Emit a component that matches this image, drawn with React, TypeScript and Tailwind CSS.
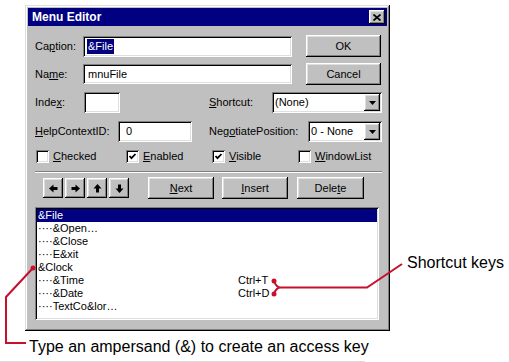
import React from "react";

const raised =
  "bg-[#c0c0c0] shadow-[inset_-1px_-1px_0_#000,inset_1px_1px_0_#fff,inset_-2px_-2px_0_#808080,inset_2px_2px_0_#dfdfdf]";
const sunken =
  "bg-white shadow-[inset_1px_1px_0_#808080,inset_-1px_-1px_0_#fff,inset_2px_2px_0_#000,inset_-2px_-2px_0_#dfdfdf]";

function U({ children }: { children: React.ReactNode }) {
  return <span className="underline underline-offset-[1px]">{children}</span>;
}

function DropBtn() {
  return (
    <div className={`${raised} w-[16px] h-[17px] flex items-center justify-center`}>
      <svg width="7" height="4" viewBox="0 0 7 4">
        <polygon points="0,0 7,0 3.5,4" fill="#000" />
      </svg>
    </div>
  );
}

function Check({ checked, label }: { checked: boolean; label: React.ReactNode }) {
  return (
    <div className="flex items-center gap-[4px]">
      <div className={`${sunken} w-[13px] h-[13px] flex items-center justify-center`}>
        {checked && (
          <svg width="9" height="9" viewBox="0 0 9 9">
            <path d="M1.5 4 L3.5 6.2 L7.5 2" stroke="#000" strokeWidth="1.8" fill="none" />
          </svg>
        )}
      </div>
      <span>{label}</span>
    </div>
  );
}

function Arrow({ rot }: { rot: number }) {
  return (
    <div className={`${raised} w-[20px] h-[20px] flex items-center justify-center`}>
      <svg width="9" height="9" viewBox="0 0 9 9" style={{ transform: `rotate(${rot}deg)` }}>
        <polygon points="0,4.5 4.5,0.5 4.5,3 8.5,3 8.5,6 4.5,6 4.5,8.5" fill="#000" />
      </svg>
    </div>
  );
}

const rows: { t: string; s?: string; sel?: boolean }[] = [
  { t: "&File", sel: true },
  { t: "····&Open…" },
  { t: "····&Close" },
  { t: "····E&xit" },
  { t: "&Clock" },
  { t: "····&Time", s: "Ctrl+T" },
  { t: "····&Date", s: "Ctrl+D" },
  { t: "····TextCo&lor…" },
];

export default function App() {
  return (
    <div className="w-[509px] h-[362px] bg-white relative overflow-hidden font-['Liberation_Sans',Arial,sans-serif] text-[11px] text-black leading-none">
      <div className="ml-[25px] mt-[5px] w-[365px] h-[326px] bg-[#c0c0c0] p-[3px] shadow-[inset_-1px_-1px_0_#000,inset_1px_1px_0_#dfdfdf,inset_-2px_-2px_0_#808080,inset_2px_2px_0_#fff]">
        <div className="h-[18px] bg-[#000080] flex items-center justify-between pl-[4px] pr-[2px]">
          <span className="text-white font-bold text-[12px]">Menu Editor</span>
          <div className={`${raised} w-[16px] h-[14px] flex items-center justify-center`}>
            <svg width="8" height="7" viewBox="0 0 8 7">
              <path d="M0.5 0.5 L7.5 6.5 M7.5 0.5 L0.5 6.5" stroke="#000" strokeWidth="1.7" />
            </svg>
          </div>
        </div>

        <div className="pl-[7px] pr-[5px] flex flex-col">
          {/* Caption */}
          <div className="mt-[9px] h-[22px] flex items-center">
            <span className="w-[48px]">
              Ca<U>p</U>tion:
            </span>
            <div className={`${sunken} w-[209px] h-[21px] flex items-center pl-[4px]`}>
              <span className="bg-[#000080] text-white px-[1px] py-[2px]">&amp;File</span>
            </div>
            <div className={`${raised} ml-[14px] w-[75px] h-[22px] flex items-center justify-center`}>OK</div>
          </div>
          {/* Name */}
          <div className="mt-[6px] h-[22px] flex items-center">
            <span className="w-[48px]">
              Na<U>m</U>e:
            </span>
            <div className={`${sunken} w-[209px] h-[20px] flex items-center pl-[5px]`}>mnuFile</div>
            <div className={`${raised} ml-[14px] w-[75px] h-[22px] flex items-center justify-center`}>Cancel</div>
          </div>
          {/* Index / Shortcut */}
          <div className="mt-[7px] h-[21px] flex items-center">
            <div className="w-[174px] flex items-center">
              <span className="w-[49px]">
                Inde<U>x</U>:
              </span>
              <div className={`${sunken} w-[36px] h-[21px]`} />
            </div>
            <span className="w-[63px]">
              <U>S</U>hortcut:
            </span>
            <div className={`${sunken} w-[110px] h-[21px] flex items-center justify-between pl-[3px] pr-[2px]`}>
              <span>(None)</span>
              <DropBtn />
            </div>
          </div>
          {/* HelpContextID / NegotiatePosition */}
          <div className="mt-[8px] h-[21px] flex items-center">
            <div className="w-[174px] flex items-center">
              <span className="w-[83px]">
                <U>H</U>elpContextID:
              </span>
              <div className={`${sunken} w-[74px] h-[21px] flex items-center pl-[8px]`}>0</div>
            </div>
            <span className="w-[99px]">
              Neg<U>o</U>tiatePosition:
            </span>
            <div className={`${sunken} w-[74px] h-[21px] flex items-center justify-between pl-[3px] pr-[2px]`}>
              <span>0 - None</span>
              <DropBtn />
            </div>
          </div>
          {/* Checkboxes */}
          <div className="mt-[7px] h-[14px] flex items-center pl-[1px]">
            <div className="w-[90px]">
              <Check checked={false} label={<><U>C</U>hecked</>} />
            </div>
            <div className="w-[86px]">
              <Check checked label={<><U>E</U>nabled</>} />
            </div>
            <div className="w-[86px]">
              <Check checked label={<><U>V</U>isible</>} />
            </div>
            <Check checked={false} label={<><U>W</U>indowList</>} />
          </div>
          {/* Separator */}
          <div className="mt-[8px] h-[2px] border-t border-t-[#808080] border-b border-b-white" />
          {/* Buttons */}
          <div className="mt-[4px] h-[22px] flex items-center">
            <div className="ml-[8px] flex gap-[2px]">
              <Arrow rot={0} />
              <Arrow rot={180} />
              <Arrow rot={90} />
              <Arrow rot={270} />
            </div>
            <div className={`${raised} ml-[19px] w-[66px] h-[22px] flex items-center justify-center`}>
              <U>N</U>ext
            </div>
            <div className={`${raised} ml-[8px] w-[66px] h-[22px] flex items-center justify-center`}>
              <U>I</U>nsert
            </div>
            <div className={`${raised} ml-[9px] w-[67px] h-[22px] flex items-center justify-center`}>
              Dele<U>t</U>e
            </div>
          </div>
          {/* List */}
          <div className={`${sunken} mt-[8px] w-[344px] h-[113px] p-[2px]`}>
            {rows.map((r, i) => (
              <div
                key={i}
                className={`h-[13px] flex items-center pl-[1px] ${r.sel ? "bg-[#000080] text-white" : ""}`}
              >
                <span className="w-[200px] whitespace-pre">{r.t}</span>
                {r.s && <span>{r.s}</span>}
              </div>
            ))}
          </div>
        </div>
      </div>

      <div className="mt-[7px] ml-[29px] text-[16px] leading-[17px]">
        Type an ampersand (&amp;) to create an access key
      </div>
      <div className="mt-[6px] w-[365px] h-[1px] bg-[#dcdcdc]" />

      <div className="absolute left-[407px] top-[254px] text-[16px] leading-[17px]">Shortcut keys</div>

      <svg className="absolute left-0 top-0 pointer-events-none" width="509" height="362" viewBox="0 0 509 362">
        <g stroke="#c8102e" strokeWidth="2" fill="none">
          <polyline points="33,268 6,297 6,343 26,343" />
          <path d="M274 281 Q276 287.5 281 287.5 M274 294 Q276 287.5 281 287.5" />
          <polyline points="281,287.5 367,287.5 402,264" />
        </g>
        <g fill="#c8102e">
          <circle cx="33" cy="268" r="2.5" />
          <circle cx="274" cy="281" r="2.5" />
          <circle cx="274" cy="294" r="2.5" />
        </g>
      </svg>
    </div>
  );
}
